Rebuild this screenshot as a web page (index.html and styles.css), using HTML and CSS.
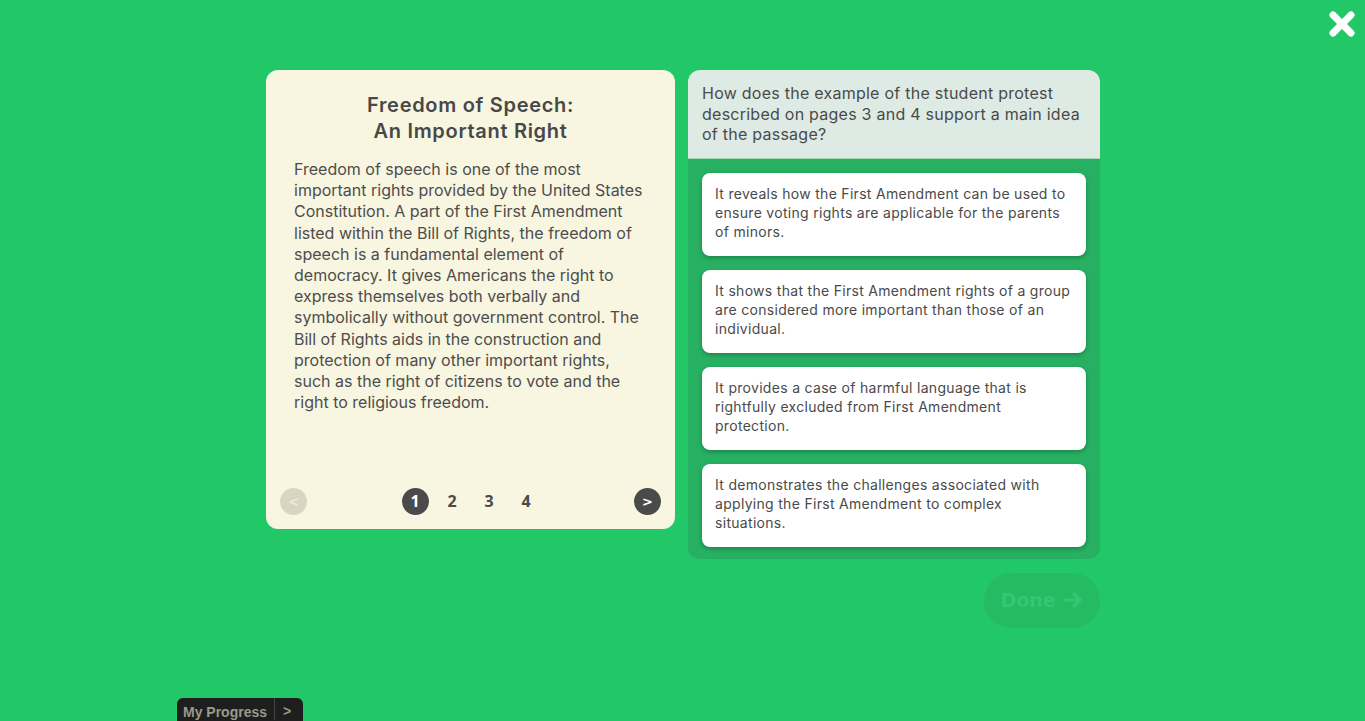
FILE: index.html
```html
<!DOCTYPE html>
<html>
<head>
<meta charset="utf-8">
<link rel="stylesheet" href="styles.css">
</head>
<body>
<div class="page">
  <button class="close" aria-label="Close">
    <svg width="28" height="28" viewBox="0 0 28 28"><path d="M5 5 L23 23 M23 5 L5 23" stroke="#fff" stroke-width="7" stroke-linecap="round"/></svg>
  </button>
  <main class="stage">
    <section class="passage">
      <h1 class="title">Freedom of Speech:<br>An Important Right</h1>
      <p class="body">Freedom of speech is one of the most important rights provided by the United States Constitution. A part of the First Amendment listed within the Bill of Rights, the freedom of speech is a fundamental element of democracy. It gives Americans the right to express themselves both verbally and symbolically without government control. The Bill of Rights aids in the construction and protection of many other important rights, such as the right of citizens to vote and the right to religious freedom.</p>
      <div class="pager">
        <span class="arrow disabled">&lt;</span>
        <div class="pages">
          <span class="pg active">1</span>
          <span class="pg">2</span>
          <span class="pg">3</span>
          <span class="pg">4</span>
        </div>
        <span class="arrow">&gt;</span>
      </div>
    </section>
    <div class="right">
      <section class="question">
        <div class="prompt">How does the example of the student protest described on pages 3 and 4 support a main idea of the passage?</div>
        <div class="options">
          <div class="opt">It reveals how the First Amendment can be used to ensure voting rights are applicable for the parents of minors.</div>
          <div class="opt">It shows that the First Amendment rights of a group are considered more important than those of an individual.</div>
          <div class="opt">It provides a case of harmful language that is rightfully excluded from First Amendment protection.</div>
          <div class="opt">It demonstrates the challenges associated with applying the First Amendment to complex situations.</div>
        </div>
      </section>
      <div class="done-row">
        <button class="done">Done
          <svg width="20" height="18" viewBox="0 0 20 18"><path d="M2 9 H16 M10 3 L16 9 L10 15" stroke="currentColor" stroke-width="3.2" fill="none" stroke-linecap="round" stroke-linejoin="round"/></svg>
        </button>
      </div>
    </div>
  </main>
  <div class="progress"><span class="plabel">My Progress</span><span class="pnext">&gt;</span></div>
</div>
</body>
</html>
```
FILE: styles.css
```css
* { box-sizing: border-box; }
html, body { margin: 0; padding: 0; }
body {
  background: #22c768;
  width: 1365px;
  height: 721px;
  overflow: hidden;
  font-family: "Inter", "Open Sans", sans-serif;
  color: #4a4a4a;
}
.page { position: relative; width: 1365px; height: 721px; }
.close {
  position: absolute;
  top: 10px;
  right: 9px;
  width: 28px;
  height: 28px;
  padding: 0;
  border: 0;
  background: none;
  display: flex;
}
.stage {
  display: flex;
  align-items: flex-start;
  gap: 13px;
  padding: 70px 0 0 266px;
}
.passage {
  width: 409px;
  height: 459px;
  background: #f8f6e0;
  border-radius: 12px;
  padding: 22px 14px 14px 14px;
  display: flex;
  flex-direction: column;
}
.title {
  margin: 0;
  text-align: center;
  font-size: 20px;
  font-weight: 600;
  line-height: 26px;
  color: #484848;
  letter-spacing: 0.7px;
}
.body {
  margin: 15px 0 0 0;
  padding: 0 12px 0 14px;
  font-size: 16px;
  line-height: 21.2px;
  font-weight: 400;
  color: #4d4d4d;
  letter-spacing: 0;
  flex: 1;
}
.pager {
  display: flex;
  align-items: center;
  justify-content: space-between;
  height: 28px;
}
.arrow {
  width: 27px;
  height: 27px;
  border-radius: 50%;
  background: #4a4a4a;
  color: #fff;
  display: flex;
  align-items: center;
  justify-content: center;
  font-family: "DejaVu Sans", sans-serif;
  font-weight: bold;
  font-size: 13px;
}
.arrow.disabled { background: #d8d6c3; color: #ecebde; }
.pages { display: flex; gap: 10px; }
.pg {
  width: 27px;
  height: 27px;
  border-radius: 50%;
  display: flex;
  align-items: center;
  justify-content: center;
  font-family: "Open Sans", sans-serif;
  font-weight: 700;
  font-size: 16px;
  color: #4a4a4a;
}
.pg.active { background: #4a4a4a; color: #fff; }
.right { width: 412px; display: flex; flex-direction: column; }
.question {
  background: #27b062;
  border-radius: 12px;
  overflow: hidden;
}
.prompt {
  background: #deebe4;
  padding: 13px 14px 13px 14px;
  font-size: 16px;
  line-height: 20.5px;
  letter-spacing: 0.25px;
  color: #4a4a4a;
  border-bottom: 1px solid #9fd9b5;
}
.options {
  padding: 14px 14px 12px 14px;
  display: flex;
  flex-direction: column;
  gap: 14px;
}
.opt {
  background: #fff;
  border-radius: 8px;
  height: 83px;
  padding: 11px 13px;
  font-size: 14px;
  line-height: 19px;
  letter-spacing: 0.3px;
  color: #4a4a4a;
  box-shadow: 0 2px 4px rgba(0,0,0,0.25);
}
.done-row { display: flex; justify-content: flex-end; margin-top: 14px; }
.done {
  width: 116px;
  height: 55px;
  border: 0;
  border-radius: 28px;
  background: #25bb63;
  color: #36c573;
  font-family: "DejaVu Sans", sans-serif;
  font-weight: bold;
  font-size: 19px;
  display: flex;
  align-items: center;
  justify-content: center;
  gap: 8px;
  padding: 0;
}
.progress {
  position: absolute;
  left: 177px;
  top: 698px;
  height: 30px;
  background: #1e1e1e;
  border-radius: 6px;
  display: flex;
  font-family: "Liberation Sans", sans-serif;
  font-weight: bold;
  font-size: 14px;
  color: #9a9a8a;
}
.plabel { padding: 6px 7px 0 6px; border-right: 1px solid #444; height: 22px; }
.pnext { padding: 5px 12px 0 8px; }
```
